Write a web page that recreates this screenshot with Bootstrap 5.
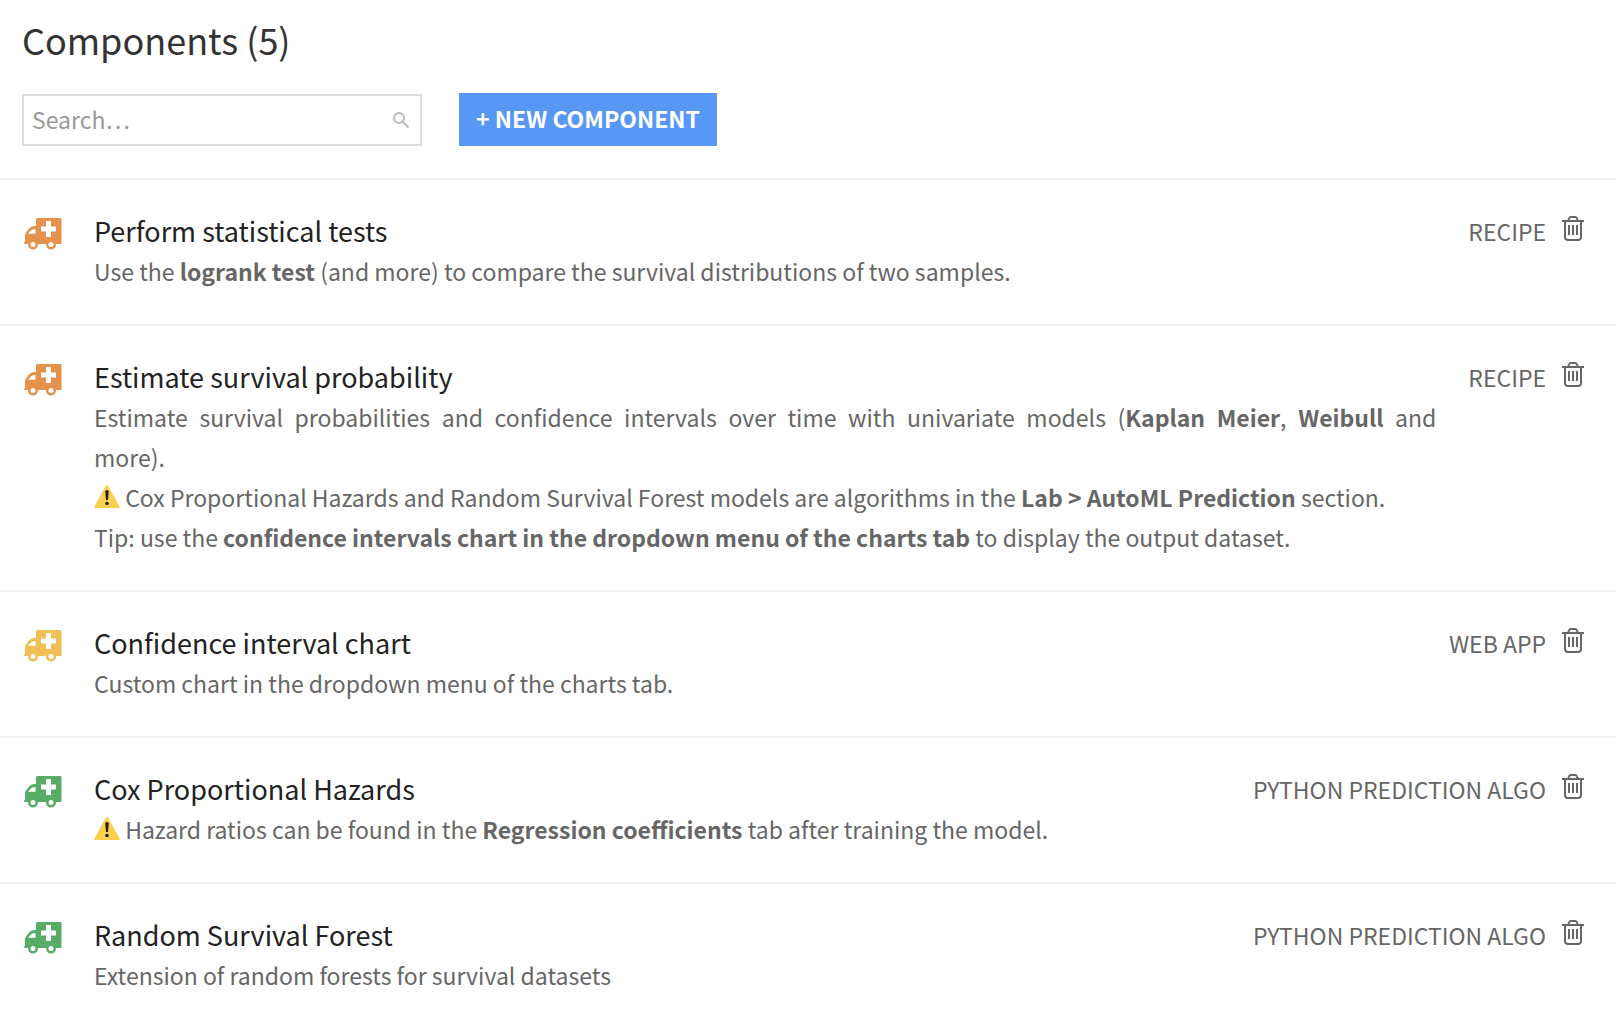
<!DOCTYPE html>
<html lang="en">
<head>
<meta charset="utf-8">
<meta name="viewport" content="width=device-width, initial-scale=1">
<title>Components</title>
<link rel="stylesheet" href="https://cdn.jsdelivr.net/npm/bootstrap@5.3.0/dist/css/bootstrap.min.css">
<style>
body { font-family: "Noto Sans CJK SC", "Noto Sans", sans-serif; font-size: 23px; line-height: 40px; color: #666; background: #fff; }
.page-head { padding: 15px 22px 32px; }
.page-title { font-size: 36px; line-height: 48px; font-weight: 400; color: #333; }
.head-tools { gap: 37px; margin-top: 30px; }
.search-box { width: 400px; }
.search-box .form-control { height: 52px; font-size: 23px; line-height: 46px; padding: 0 48px 2px 8px; border: 2px solid #ddd; color: #333; }
.search-box .form-control::placeholder { color: #999; }
.search-icon { position: absolute; right: 12px; top: 17px; pointer-events: none; }
.btn-new { font-size: 23px; line-height: 40px; padding: 5px 17px 8px; background: #5897f6; color: #fff; border: 0; }
.btn-new:hover { background: #3b82ec; color: #fff; }
.component { padding: 31px 32px 33px 24px; border-top: 2px solid #f2f2f2; }
.component-icon { width: 38px; margin-right: 32px; padding-top: 7px; line-height: 0; }
.component-name { font-size: 27px; line-height: 40px; font-weight: 400; color: #222; }
.component-text { text-align: justify; }
.full-line { text-align-last: justify; }
.component-side { margin-left: 32px; }
.trash { margin-left: 16px; padding: 5px 0 0; line-height: 0; color: #666; }
.warn { width: 26px; height: 24px; vertical-align: -1px; }
.recipe { color: #e5924d; }
.webapp { color: #f0bf55; }
.algo { color: #57ad67; }
</style>
<script src="https://cdn.jsdelivr.net/npm/bootstrap@5.3.0/dist/js/bootstrap.bundle.min.js"></script>
</head>
<body>
<svg class="d-none" aria-hidden="true">
  <symbol id="truck" viewBox="0 0 38 32">
    <path fill="currentColor" fill-rule="evenodd" d="M13.500 0H36.500Q37.500 0 37.500 1.500V24.500Q37.500 26 36.500 26H32A5 5 0 0 1 22 27V26H14A5 5 0 0 1 4 27V26H1Q0 26 0 25T1 24V17.500Q1 16 2 14.500L5 10.500Q7 8 10 8H12V1.500Q12 0 13.500 0ZM4.200 15.800H11.600V11.200H10Q8.200 11.200 7.200 12.200L4.200 15.500ZM22 3V8.500H17V13.500H22V19H27V13.500H32V8.500H27V3ZM9 24A2.500 2.500 0 1 0 9 29A2.500 2.500 0 1 0 9 24ZM27 24A2.500 2.500 0 1 0 27 29A2.500 2.500 0 1 0 27 24Z"/>
  </symbol>
  <symbol id="bin" viewBox="0 0 22 26">
    <g fill="none" stroke="currentColor" stroke-width="2"><path d="M0 5H22M6 5L7 2.500Q7.500 1 9 1H13Q14.500 1 15 2.500L16 5M3 5V21Q3 24 6 24H16Q19 24 19 21V5"/><path d="M7 9V19M11 9V19M15 9V19"/></g>
  </symbol>
  <symbol id="warning" viewBox="0 0 26 24">
    <path fill="#fbd04e" d="M13 1Q13.800 1 14.300 2L25.600 22.500Q26 24 25 24H1Q0 24 .4 22.500L11.700 2Q12.200 1 13 1Z"/>
    <path fill="#222" d="M11.300 7.500Q11.300 6 13 6T14.700 7.500L14 16H12Z"/><circle cx="13" cy="19.500" r="1.800" fill="#222"/>
  </symbol>
</svg>

<header class="page-head">
  <h1 class="page-title mb-0">Components (5)</h1>
  <div class="head-tools d-flex align-items-end">
    <div class="search-box position-relative">
      <input id="search" type="text" class="form-control rounded-0" placeholder="Search…" aria-label="Search components">
      <svg class="search-icon" width="18" height="18" viewBox="0 0 18 18" fill="none" stroke="#bbb" stroke-width="2"><circle cx="7" cy="7" r="5"/><path d="M10.500 10.500L16.500 16.500"/></svg>
    </div>
    <button type="button" class="btn btn-new rounded-0 fw-bold text-uppercase">+ New component</button>
  </div>
</header>

<main>
  <article class="component d-flex align-items-start">
    <div class="component-icon flex-shrink-0 recipe"><svg width="38" height="32"><use href="#truck"/></svg></div>
    <div class="flex-grow-1">
      <h2 class="component-name mb-0">Perform statistical tests</h2>
      <div class="component-text">Use the <strong>logrank test</strong> (and more) to compare the survival distributions of two samples.</div>
    </div>
    <div class="component-side d-flex align-items-start flex-shrink-0 text-uppercase">Recipe
      <button type="button" class="btn trash border-0" aria-label="Delete"><svg width="22" height="26"><use href="#bin"/></svg></button></div>
  </article>

  <article class="component d-flex align-items-start">
    <div class="component-icon flex-shrink-0 recipe"><svg width="38" height="32"><use href="#truck"/></svg></div>
    <div class="flex-grow-1">
      <h2 class="component-name mb-0">Estimate survival probability</h2>
      <div class="component-text"><span class="full-line d-block">Estimate survival probabilities and confidence intervals over time with univariate models (<strong>Kaplan Meier</strong>, <strong>Weibull</strong> and</span> more).<br>
        <svg class="warn" role="img" aria-label="Warning"><use href="#warning"/></svg> Cox Proportional Hazards and Random Survival Forest models are algorithms in the <strong>Lab &gt; AutoML Prediction</strong> section.<br>
        Tip: use the <strong>confidence intervals chart in the dropdown menu of the charts tab</strong> to display the output dataset.</div>
    </div>
    <div class="component-side d-flex align-items-start flex-shrink-0 text-uppercase">Recipe
      <button type="button" class="btn trash border-0" aria-label="Delete"><svg width="22" height="26"><use href="#bin"/></svg></button></div>
  </article>

  <article class="component d-flex align-items-start">
    <div class="component-icon flex-shrink-0 webapp"><svg width="38" height="32"><use href="#truck"/></svg></div>
    <div class="flex-grow-1">
      <h2 class="component-name mb-0">Confidence interval chart</h2>
      <div class="component-text">Custom chart in the dropdown menu of the charts tab.</div>
    </div>
    <div class="component-side d-flex align-items-start flex-shrink-0 text-uppercase">Web app
      <button type="button" class="btn trash border-0" aria-label="Delete"><svg width="22" height="26"><use href="#bin"/></svg></button></div>
  </article>

  <article class="component d-flex align-items-start">
    <div class="component-icon flex-shrink-0 algo"><svg width="38" height="32"><use href="#truck"/></svg></div>
    <div class="flex-grow-1">
      <h2 class="component-name mb-0">Cox Proportional Hazards</h2>
      <div class="component-text"><svg class="warn" role="img" aria-label="Warning"><use href="#warning"/></svg> Hazard ratios can be found in the <strong>Regression coefficients</strong> tab after training the model.</div>
    </div>
    <div class="component-side d-flex align-items-start flex-shrink-0 text-uppercase">Python prediction algo
      <button type="button" class="btn trash border-0" aria-label="Delete"><svg width="22" height="26"><use href="#bin"/></svg></button></div>
  </article>

  <article class="component d-flex align-items-start">
    <div class="component-icon flex-shrink-0 algo"><svg width="38" height="32"><use href="#truck"/></svg></div>
    <div class="flex-grow-1">
      <h2 class="component-name mb-0">Random Survival Forest</h2>
      <div class="component-text">Extension of random forests for survival datasets</div>
    </div>
    <div class="component-side d-flex align-items-start flex-shrink-0 text-uppercase">Python prediction algo
      <button type="button" class="btn trash border-0" aria-label="Delete"><svg width="22" height="26"><use href="#bin"/></svg></button></div>
  </article>
</main>
</body>
</html>
